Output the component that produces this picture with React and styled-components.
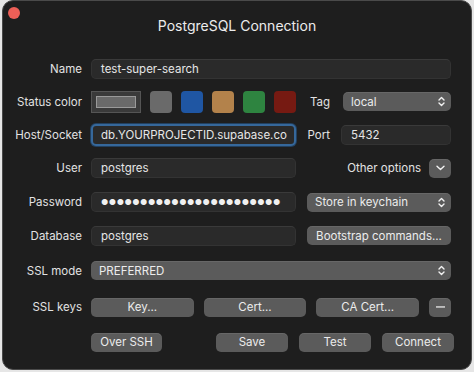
import React from 'react';
import styled, { createGlobalStyle } from 'styled-components';

const Global = createGlobalStyle`
  html, body { margin: 0; padding: 0; background: #e6e6e6; }
  body { font-family: Inter, "Noto Sans", sans-serif; -webkit-font-smoothing: antialiased; }
  * { box-sizing: border-box; }
`;

const Window = styled.div`
  margin: 0 0 0 2px;
  width: 470px;
  height: 370px;
  background: #1e1e1e;
  border: 1px solid #4a4a4a;
  border-radius: 11px;
  color: #e2e2e2;
  font-size: 11.5px;
  display: flex;
  flex-direction: column;
  overflow: hidden;
`;

const TitleBar = styled.div`
  height: 51px;
  display: grid;
  grid-template-columns: 1fr auto 1fr;
  align-items: start;
`;

const Close = styled.span`
  width: 12px;
  height: 12px;
  margin: 6px 0 0 5px;
  border-radius: 50%;
  background: #ed5f57;
`;

const Title = styled.div`
  font-size: 14px;
  color: #ececec;
  line-height: 18px;
  margin-top: 16px;
`;

const Form = styled.div`
  display: flex;
  flex-direction: column;
  padding-right: 20px;
`;

const Row = styled.div`
  height: ${p => p.$h}px;
  display: flex;
  align-items: center;
  gap: ${p => p.$gap ?? 0}px;
`;

const Label = styled.div`
  width: 79px;
  margin-right: ${p => p.$mr ?? 9}px;
  text-align: right;
  color: #e2e2e2;
  flex: none;
`;

const SideLabel = styled.div`
  color: #e2e2e2;
  flex: none;
`;

const Field = styled.div`
  height: 20px;
  flex: ${p => (p.$w ? 'none' : '1')};
  width: ${p => (p.$w ? `${p.$w}px` : 'auto')};
  min-width: 0;
  background: #2a2a2a;
  border: 1px solid #333;
  border-top-color: #3a3a3a;
  border-radius: 5px;
  padding: 0 9px;
  display: flex;
  align-items: center;
  white-space: nowrap;
  overflow: hidden;
  color: #e6e6e6;
  ${p => p.$focus && `
    height: 22px;
    border: 2px solid #36689b;
    box-shadow: 0 0 0 1px #22405f;
    padding: 0 8px;
  `}
`;

const Dots = styled.span`
  letter-spacing: 0.5px;
  font-size: 8px;
  color: #f0f0f0;
`;

const LeftCol = styled.div`
  width: 205px;
  flex: none;
  display: flex;
  gap: 9px;
  align-items: center;
`;

const RightCol = styled.div`
  flex: 1;
  margin-left: 11px;
  display: flex;
  align-items: center;
  justify-content: flex-end;
  gap: ${p => p.$gap ?? 0}px;
`;

const Swatch = styled.div`
  width: 22px;
  height: 22px;
  border-radius: 4px;
  background: ${p => p.$c};
  flex: none;
`;

const SelectedSwatch = styled.div`
  width: 50px;
  height: 22px;
  background: #3a3a3a;
  border: 1px solid #555;
  padding: 4px;
  flex: none;
  display: flex;
`;

const SwatchInner = styled.div`
  flex: 1;
  background: #6a6a6a;
  border: 1px solid #9a9a9a;
`;

const Select = styled.div`
  height: 19px;
  flex: ${p => (p.$w ? 'none' : '1')};
  width: ${p => (p.$w ? `${p.$w}px` : 'auto')};
  background: #5b5b5b;
  border-radius: 5px;
  padding: 0 6px 0 8px;
  display: flex;
  align-items: center;
  justify-content: space-between;
  color: #ececec;
  box-shadow: inset 0 1px 0 rgba(255,255,255,0.08);
`;

const Button = styled.div`
  height: 19px;
  flex: ${p => (p.$w ? 'none' : '1')};
  width: ${p => (p.$w ? `${p.$w}px` : 'auto')};
  background: #5b5b5b;
  border-radius: 5px;
  display: flex;
  align-items: center;
  justify-content: center;
  color: #ececec;
  white-space: nowrap;
  box-shadow: inset 0 1px 0 rgba(255,255,255,0.08);
`;

const Spacer = styled.div`
  flex: 1;
`;

const BottomGroup = styled.div`
  display: flex;
  gap: 11px;
  margin-right: -3px;
`;

const UpDown = () => (
  <svg width="7" height="11" viewBox="0 0 7 11" fill="none" stroke="#f2f2f2" strokeWidth="1.4" strokeLinecap="round" strokeLinejoin="round">
    <path d="M1 4 L3.5 1.5 L6 4" />
    <path d="M1 7 L3.5 9.5 L6 7" />
  </svg>
);

const ChevronDown = () => (
  <svg width="9" height="6" viewBox="0 0 9 6" fill="none" stroke="#f2f2f2" strokeWidth="1.4" strokeLinecap="round" strokeLinejoin="round">
    <path d="M1 1.2 L4.5 4.6 L8 1.2" />
  </svg>
);

const Minus = () => (
  <svg width="9" height="2" viewBox="0 0 9 2">
    <rect x="0" y="0.3" width="9" height="1.3" fill="#e8e8e8" />
  </svg>
);

export default function App() {
  return (
    <>
      <Global />
      <Window>
        <TitleBar>
          <Close />
          <Title>PostgreSQL Connection</Title>
          <span />
        </TitleBar>
        <Form>
          <Row $h={33}>
            <Label>Name</Label>
            <Field>test-super-search</Field>
          </Row>
          <Row $h={33}>
            <Label>Status color</Label>
            <LeftCol>
              <SelectedSwatch><SwatchInner /></SelectedSwatch>
              <Swatch $c="#6a6a6a" />
              <Swatch $c="#1f56a3" />
              <Swatch $c="#b3824b" />
              <Swatch $c="#2e8440" />
              <Swatch $c="#761a12" />
            </LeftCol>
            <RightCol $gap={13}>
              <SideLabel>Tag</SideLabel>
              <Select $w={108}>local<UpDown /></Select>
            </RightCol>
          </Row>
          <Row $h={33}>
            <Label>Host/Socket</Label>
            <LeftCol>
              <Field $focus>db.YOURPROJECTID.supabase.co</Field>
            </LeftCol>
            <RightCol $gap={11}>
              <SideLabel>Port</SideLabel>
              <Field $w={110}>5432</Field>
            </RightCol>
          </Row>
          <Row $h={34}>
            <Label>User</Label>
            <LeftCol>
              <Field>postgres</Field>
            </LeftCol>
            <RightCol $gap={8}>
              <SideLabel>Other options</SideLabel>
              <Button $w={22}><ChevronDown /></Button>
            </RightCol>
          </Row>
          <Row $h={34}>
            <Label>Password</Label>
            <LeftCol>
              <Field><Dots>●●●●●●●●●●●●●●●●●●●●●●●</Dots></Field>
            </LeftCol>
            <RightCol>
              <Select>Store in keychain<UpDown /></Select>
            </RightCol>
          </Row>
          <Row $h={33}>
            <Label>Database</Label>
            <LeftCol>
              <Field>postgres</Field>
            </LeftCol>
            <RightCol>
              <Button>Bootstrap commands...</Button>
            </RightCol>
          </Row>
          <Row $h={37}>
            <Label>SSL mode</Label>
            <Select>PREFERRED<UpDown /></Select>
          </Row>
          <Row $h={36} $gap={10}>
            <Label $mr={-1}>SSL keys</Label>
            <Button>Key...</Button>
            <Button>Cert...</Button>
            <Button>CA Cert...</Button>
            <Button $w={22}><Minus /></Button>
          </Row>
          <Row $h={34}>
            <Label />
            <Button $w={71}>Over SSH</Button>
            <Spacer />
            <BottomGroup>
              <Button $w={72}>Save</Button>
              <Button $w={72}>Test</Button>
              <Button $w={72}>Connect</Button>
            </BottomGroup>
          </Row>
        </Form>
      </Window>
    </>
  );
}
